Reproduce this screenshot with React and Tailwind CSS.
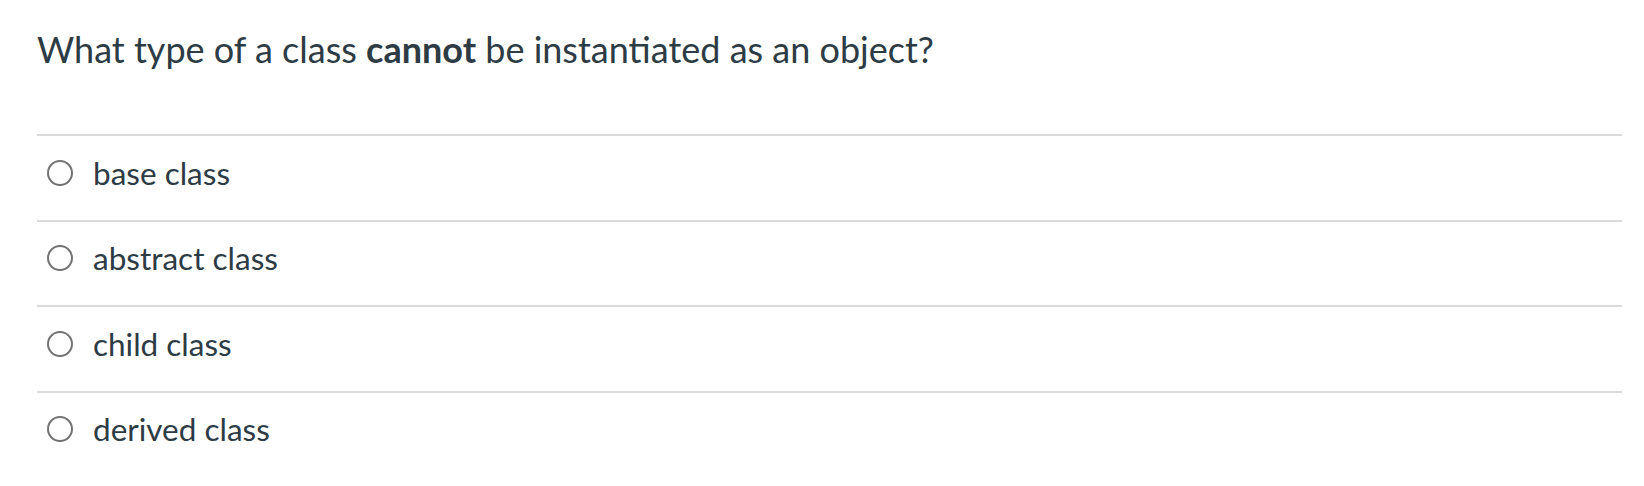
import { useState } from "react";

const options = ["base class", "abstract class", "child class", "derived class"];

export default function App() {
  const [picked, setPicked] = useState(null);

  return (
    <div className="h-[486px] w-full bg-white pl-[37px] pr-[22px] pt-[28px] font-['Lato',sans-serif] text-[#2d3b45]">
      <p className="text-[36px] leading-[43px]">
        What type of a class <b className="font-bold">cannot</b> be instantiated as an object?
      </p>

      <div className="mt-[63px]">
        {options.map((opt, i) => (
          <label
            key={opt}
            className="flex h-[85.5px] cursor-pointer items-center border-t-2 border-[#dadada] pb-[10px] pl-[10px]"
          >
            <span className="flex h-[26px] w-[26px] shrink-0 items-center justify-center rounded-full border-2 border-[#737373]">
              {picked === i && <span className="h-[12px] w-[12px] rounded-full bg-[#737373]" />}
            </span>
            <input
              type="radio"
              name="q"
              className="hidden"
              checked={picked === i}
              onChange={() => setPicked(i)}
            />
            <span className="ml-[20px] text-[31.5px] leading-[38px]">{opt}</span>
          </label>
        ))}
      </div>
    </div>
  );
}
